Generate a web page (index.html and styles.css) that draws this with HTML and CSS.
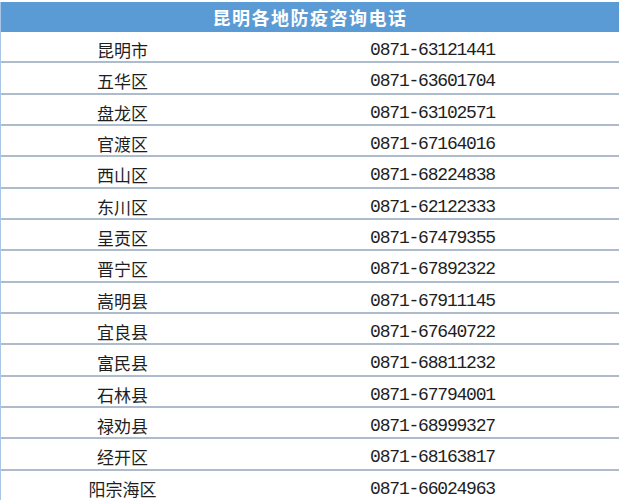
FILE: index.html
```html
<!DOCTYPE html>
<html lang="zh-CN">
<head>
<meta charset="utf-8">
<title>昆明各地防疫咨询电话</title>
<link rel="stylesheet" href="styles.css">
</head>
<body>
<div class="table">
  <div class="head">昆明各地防疫咨询电话</div>
  <div class="row"><div class="name">昆明市</div><div class="tel">0871-63121441</div></div>
  <div class="row"><div class="name">五华区</div><div class="tel">0871-63601704</div></div>
  <div class="row"><div class="name">盘龙区</div><div class="tel">0871-63102571</div></div>
  <div class="row"><div class="name">官渡区</div><div class="tel">0871-67164016</div></div>
  <div class="row"><div class="name">西山区</div><div class="tel">0871-68224838</div></div>
  <div class="row"><div class="name">东川区</div><div class="tel">0871-62122333</div></div>
  <div class="row"><div class="name">呈贡区</div><div class="tel">0871-67479355</div></div>
  <div class="row"><div class="name">晋宁区</div><div class="tel">0871-67892322</div></div>
  <div class="row"><div class="name">嵩明县</div><div class="tel">0871-67911145</div></div>
  <div class="row"><div class="name">宜良县</div><div class="tel">0871-67640722</div></div>
  <div class="row"><div class="name">富民县</div><div class="tel">0871-68811232</div></div>
  <div class="row"><div class="name">石林县</div><div class="tel">0871-67794001</div></div>
  <div class="row"><div class="name">禄劝县</div><div class="tel">0871-68999327</div></div>
  <div class="row"><div class="name">经开区</div><div class="tel">0871-68163817</div></div>
  <div class="row"><div class="name">阳宗海区</div><div class="tel">0871-66024963</div></div>
</div>
</body>
</html>
```
FILE: styles.css
```css
html, body {
  margin: 0;
  padding: 0;
  background: #ffffff;
  overflow: hidden;
}
.table {
  margin-top: 2px;
  width: 619px;
  border-left: 1px solid #a9c6e6;
  box-sizing: border-box;
}
.head {
  height: 30px;
  background: #5b9bd5;
  color: #ffffff;
  font-family: "Noto Sans CJK SC", sans-serif;
  font-weight: bold;
  font-size: 18px;
  letter-spacing: 1.5px;
  display: flex;
  align-items: center;
  justify-content: center;
}
.row {
  display: grid;
  grid-template-columns: 243px 1fr;
  height: 31.35px;
  box-sizing: border-box;
  border-bottom: 2px solid #acbccd;
  align-items: center;
  color: #1e1e1e;
}
.name {
  text-align: center;
  font-family: "Noto Sans CJK SC", sans-serif;
  font-size: 17px;
  line-height: 29px;
  padding-top: 2px;
}
.tel {
  text-align: center;
  font-family: "Liberation Mono", monospace;
  font-size: 18px;
  letter-spacing: -1.2px;
  line-height: 29px;
  padding-top: 4px;
  padding-left: 2px;
}
```
